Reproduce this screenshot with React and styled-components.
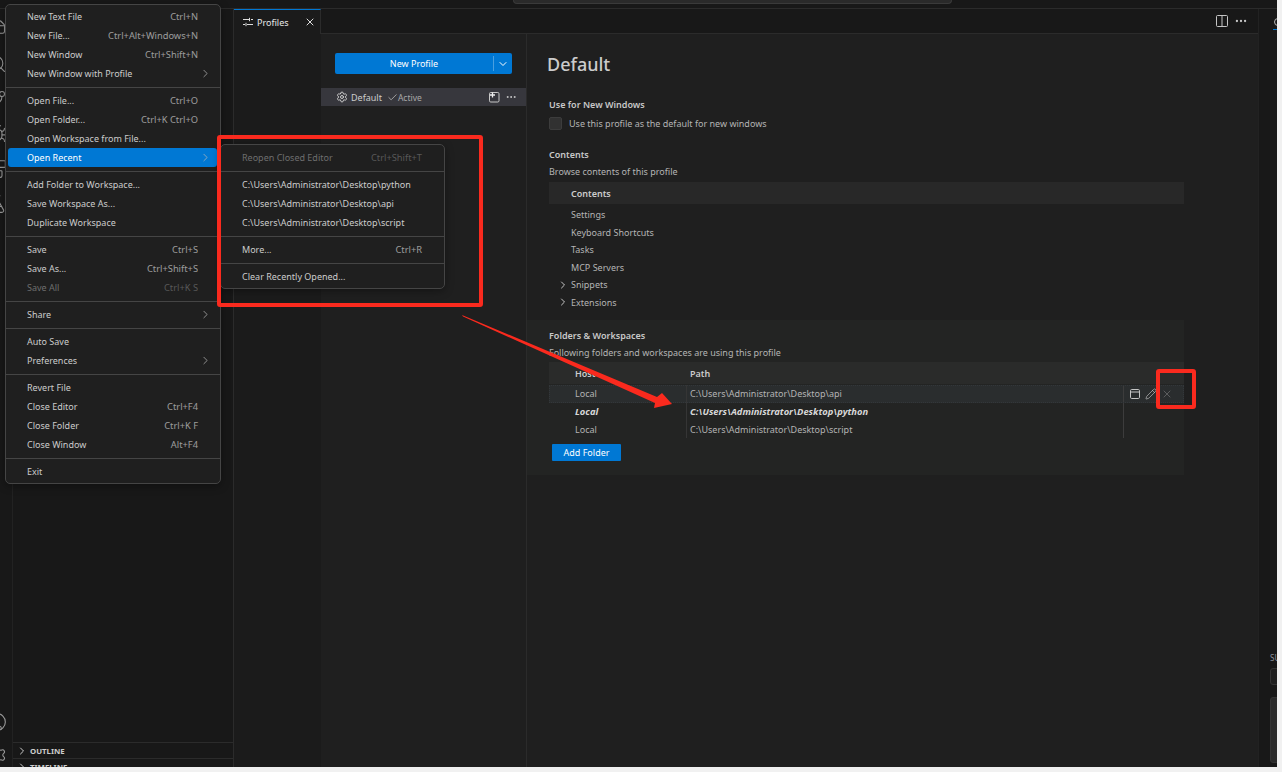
import styled, { createGlobalStyle } from "styled-components";
import {
  Files,
  Search,
  GitBranch,
  Bug,
  Blocks,
  FlaskConical,
  CircleUser,
  Settings,
  ChevronRight,
  ChevronDown,
  X,
  Check,
  Ellipsis,
  Pencil,
} from "lucide-react";

const fileMenu = [
  [
    { label: "New Text File", keys: "Ctrl+N" },
    { label: "New File...", keys: "Ctrl+Alt+Windows+N" },
    { label: "New Window", keys: "Ctrl+Shift+N" },
    { label: "New Window with Profile", more: true },
  ],
  [
    { label: "Open File...", keys: "Ctrl+O" },
    { label: "Open Folder...", keys: "Ctrl+K Ctrl+O" },
    { label: "Open Workspace from File..." },
    { label: "Open Recent", more: true, active: true },
  ],
  [
    { label: "Add Folder to Workspace..." },
    { label: "Save Workspace As..." },
    { label: "Duplicate Workspace" },
  ],
  [
    { label: "Save", keys: "Ctrl+S" },
    { label: "Save As...", keys: "Ctrl+Shift+S" },
    { label: "Save All", keys: "Ctrl+K S", disabled: true },
  ],
  [{ label: "Share", more: true }],
  [{ label: "Auto Save" }, { label: "Preferences", more: true }],
  [
    { label: "Revert File" },
    { label: "Close Editor", keys: "Ctrl+F4" },
    { label: "Close Folder", keys: "Ctrl+K F" },
    { label: "Close Window", keys: "Alt+F4" },
  ],
  [{ label: "Exit" }],
];

const recentMenu = [
  [{ label: "Reopen Closed Editor", keys: "Ctrl+Shift+T", disabled: true }],
  [
    { label: "C:\\Users\\Administrator\\Desktop\\python" },
    { label: "C:\\Users\\Administrator\\Desktop\\api" },
    { label: "C:\\Users\\Administrator\\Desktop\\script" },
  ],
  [{ label: "More...", keys: "Ctrl+R" }],
  [{ label: "Clear Recently Opened..." }],
];

const contents = [
  { label: "Settings" },
  { label: "Keyboard Shortcuts" },
  { label: "Tasks" },
  { label: "MCP Servers" },
  { label: "Snippets", more: true },
  { label: "Extensions", more: true },
];

const folders = [
  { host: "Local", path: "C:\\Users\\Administrator\\Desktop\\api", focused: true },
  { host: "Local", path: "C:\\Users\\Administrator\\Desktop\\python", current: true },
  { host: "Local", path: "C:\\Users\\Administrator\\Desktop\\script" },
];

export default function App() {
  return (
    <>
      <GlobalStyle />
      <Window>
        <TitleBar>
          <CommandCenter />
        </TitleBar>
        <Workbench>
          <ActivityBar>
            <ActivityGroup>
              <Files size={20} strokeWidth={1.3} />
              <Search size={20} strokeWidth={1.3} />
              <GitBranch size={20} strokeWidth={1.3} />
              <Bug size={20} strokeWidth={1.3} />
              <Blocks size={20} strokeWidth={1.3} />
              <FlaskConical size={20} strokeWidth={1.3} />
            </ActivityGroup>
            <ActivityGroup $bottom>
              <CircleUser size={20} strokeWidth={1.3} />
              <Settings size={20} strokeWidth={1.3} />
            </ActivityGroup>
          </ActivityBar>

          <SideBar>
            <SideFooter>
              <SideHeader>
                <ChevronRight size={12} />
                OUTLINE
              </SideHeader>
              <SideHeader>
                <ChevronRight size={12} />
                TIMELINE
              </SideHeader>
            </SideFooter>
          </SideBar>

          <Editor>
            <TabBar>
              <Tab>
                <svg width="12" height="12" viewBox="0 0 12 12" fill="none" stroke="#ddd">
                  <path d="M1 3.5h6M9 3.5h2M7.5 1.8v3.4M1 8.5h2M5 8.5h6M4 6.8v3.4" />
                </svg>
                <TabLabel>Profiles</TabLabel>
                <X size={12} color="#ddd" />
              </Tab>
              <TabActions>
                <svg width="14" height="14" viewBox="0 0 14 14" fill="none" stroke="#c5c5c5">
                  <rect x="1.5" y="1.5" width="11" height="11" rx="1" />
                  <path d="M7 1.5v11" />
                </svg>
                <Ellipsis size={14} color="#c5c5c5" />
              </TabActions>
            </TabBar>

            <ProfilesBody>
              <ProfilesList>
                <NewProfile>
                  <NewProfileLabel>New Profile</NewProfileLabel>
                  <NewProfileArrow>
                    <ChevronDown size={12} />
                  </NewProfileArrow>
                </NewProfile>
                <ProfileRow>
                  <Settings size={12} />
                  <ProfileName>Default</ProfileName>
                  <ProfileActive>
                    <Check size={11} />
                    Active
                  </ProfileActive>
                  <ProfileActions>
                    <svg width="12" height="12" viewBox="0 0 12 12" fill="none" stroke="#c8c8c8">
                      <rect x="1.5" y="1.5" width="9.5" height="9.5" rx="1.2" />
                      <path d="M4.5 1.5v5M2 4h5" stroke="#eeeeee" strokeWidth="1.3" />
                    </svg>
                    <Ellipsis size={12} />
                  </ProfileActions>
                </ProfileRow>
              </ProfilesList>

              <ProfileDetail>
                <ProfileTitle>Default</ProfileTitle>
                <Section>
                  <SectionTitle>Use for New Windows</SectionTitle>
                  <CheckRow>
                    <CheckBox />
                    <Text>Use this profile as the default for new windows</Text>
                  </CheckRow>
                </Section>
                <ContentsSection>
                  <SectionTitle>Contents</SectionTitle>
                  <Text>Browse contents of this profile</Text>
                  <ContentsHeader>Contents</ContentsHeader>
                  {contents.map((item) => (
                    <ContentsRow key={item.label}>
                      <ContentsChevron>
                        {item.more && <ChevronRight size={12} />}
                      </ContentsChevron>
                      {item.label}
                    </ContentsRow>
                  ))}
                </ContentsSection>
                <FoldersSection>
                  <SectionTitle>Folders &amp; Workspaces</SectionTitle>
                  <Text>Following folders and workspaces are using this profile</Text>
                  <FolderTable>
                    <FolderHeader>
                      <span>Host</span>
                      <span>Path</span>
                    </FolderHeader>
                    <FolderRows>
                      {folders.map((row) => (
                        <FolderRow key={row.path} $focused={row.focused} $current={row.current}>
                          <HostCell>{row.host}</HostCell>
                          <PathCell>{row.path}</PathCell>
                          <ActionCell>
                            {row.focused && (
                              <>
                                <svg width="12" height="12" viewBox="0 0 12 12" fill="none" stroke="#c5c5c5">
                                  <rect x="1.5" y="1.5" width="9" height="9" rx="1.2" />
                                  <path d="M1.5 4h9" />
                                </svg>
                                <Pencil size={12} color="#c5c5c5" strokeWidth={1.3} />
                                <X size={12} color="#777" strokeWidth={1.3} />
                              </>
                            )}
                          </ActionCell>
                        </FolderRow>
                      ))}
                    </FolderRows>
                  </FolderTable>
                  <AddFolder>Add Folder</AddFolder>
                </FoldersSection>
              </ProfileDetail>
            </ProfilesBody>
          </Editor>

          <RightPanel>
            <RightTab>
              <svg width="10" height="10" viewBox="0 0 10 10" fill="none" stroke="#b8b8b8">
                <circle cx="5" cy="5" r="3.5" />
              </svg>
            </RightTab>
            <RightBottom>
              <RightLabel>SU</RightLabel>
              <RightInput />
              <RightBox />
            </RightBottom>
          </RightPanel>
        </Workbench>

        <MainMenu>
          <MenuList groups={fileMenu} />
        </MainMenu>
        <RecentMenu>
          <MenuList groups={recentMenu} />
        </RecentMenu>

        <RedBox $x={217} $y={135} $w={266} $h={172} />
        <RedBox $x={1156} $y={369} $w={40} $h={40} />
        <Arrow width="240" height="110" viewBox="0 0 240 110">
          <polygon points="2,5 197,87 202,83 212,94 194,98 195,93 3,6.5" fill="#fa2a1e" />
        </Arrow>
      </Window>
    </>
  );
}

const MenuList = ({ groups }) => {
  return groups.map((group, i) => (
    <div key={i}>
      {i > 0 && <MenuSeparator />}
      {group.map((item) => (
        <MenuItem key={item.label} $active={item.active} $disabled={item.disabled}>
          <span>{item.label}</span>
          {item.keys && <MenuKeys>{item.keys}</MenuKeys>}
          {item.more && (
            <MenuMore>
              <ChevronRight size={13} strokeWidth={1.3} />
            </MenuMore>
          )}
        </MenuItem>
      ))}
    </div>
  ));
};

const GlobalStyle = createGlobalStyle`
  html, body {
    margin: 0;
    padding: 0;
    width: 1282px;
    height: 772px;
    overflow: hidden;
    background: #f1f1f1;
  }
  * {
    box-sizing: border-box;
  }
  body {
    font-family: "Noto Sans", "Open Sans", sans-serif;
    font-size: 9px;
    color: #cccccc;
  }
`;

const Window = styled.div`
  position: relative;
  width: 1277px;
  height: 767px;
  background: #181818;
  overflow: hidden;
  display: flex;
  flex-direction: column;
`;

const TitleBar = styled.div`
  height: 9px;
  flex: none;
  background: #181818;
  border-bottom: 1px solid #2b2b2b;
  padding-left: 513px;
`;

const CommandCenter = styled.div`
  width: 439px;
  height: 4px;
  background: #2a2a2a;
  border: 1px solid #3a3a3a;
  border-top: none;
  border-radius: 0 0 4px 4px;
`;

const Workbench = styled.div`
  flex: 1;
  min-height: 0;
  display: flex;
`;

const ActivityBar = styled.div`
  width: 13px;
  flex: none;
  display: flex;
  flex-direction: column;
  justify-content: space-between;
  overflow: hidden;
  background: #181818;
  border-right: 1px solid #222;
  color: #9a9a9a;
`;

const ActivityGroup = styled.div`
  display: flex;
  flex-direction: column;
  gap: ${(p) => (p.$bottom ? "13px" : "15px")};
  margin-left: -13px;
  padding-top: ${(p) => (p.$bottom ? "0" : "10px")};
  padding-bottom: ${(p) => (p.$bottom ? "2px" : "0")};
  svg {
    flex: none;
  }
`;

const SideBar = styled.div`
  width: 221px;
  flex: none;
  display: flex;
  flex-direction: column;
  justify-content: flex-end;
  overflow: hidden;
  background: #181818;
  border-right: 1px solid #2b2b2b;
`;

const SideFooter = styled.div`
  flex: none;
  margin-bottom: -7px;
`;

const SideHeader = styled.div`
  height: 16px;
  display: flex;
  align-items: center;
  gap: 2px;
  padding-left: 3px;
  border-top: 1px solid #2b2b2b;
  font-size: 7.8px;
  font-weight: 700;
  color: #cccccc;
`;

const Editor = styled.div`
  width: 1024px;
  flex: none;
  display: flex;
  flex-direction: column;
  background: #1f1f1f;
`;

const TabBar = styled.div`
  height: 25px;
  flex: none;
  display: flex;
  background: #181818;
`;

const Tab = styled.div`
  width: 87px;
  display: flex;
  align-items: center;
  padding: 0 4px 0 8px;
  background: #1b1b1b;
  border-top: 1px solid #0078d4;
  border-right: 1px solid #2b2b2b;
  color: #e8e8e8;
`;

const TabLabel = styled.span`
  flex: 1;
  margin-left: 3px;
`;

const TabActions = styled.div`
  flex: 1;
  display: flex;
  align-items: center;
  justify-content: flex-end;
  gap: 5px;
  padding-right: 10px;
  border-bottom: 1px solid #2b2b2b;
`;

const ProfilesBody = styled.div`
  flex: 1;
  min-height: 0;
  display: flex;
`;

const ProfilesList = styled.div`
  width: 293px;
  flex: none;
  padding-top: 19px;
  border-right: 1px solid #2b2b2b;
  background: linear-gradient(to right, #1b1b1b 87px, #1f1f1f 87px);
`;

const NewProfile = styled.div`
  width: 177px;
  height: 21px;
  margin-left: 101px;
  display: flex;
  background: #0078d4;
  border-radius: 2px;
  color: #ffffff;
`;

const NewProfileLabel = styled.div`
  flex: 1;
  display: flex;
  align-items: center;
  justify-content: center;
`;

const NewProfileArrow = styled.div`
  width: 19px;
  margin: 3px 0;
  display: flex;
  align-items: center;
  justify-content: center;
  border-left: 1px solid #4a9fe0;
`;

const ProfileRow = styled.div`
  width: 205px;
  height: 18px;
  margin: 14px 0 0 87px;
  padding: 0 9px 0 15px;
  display: flex;
  align-items: center;
  background: #37373d;
  color: #cccccc;
`;

const ProfileName = styled.span`
  margin-left: 3px;
`;

const ProfileActive = styled.span`
  display: flex;
  align-items: center;
  margin-left: 5px;
  font-size: 8.5px;
  color: #a8a8a8;
`;

const ProfileActions = styled.div`
  margin-left: auto;
  display: flex;
  align-items: center;
  gap: 5px;
`;

const ProfileDetail = styled.div`
  flex: 1;
  min-width: 0;
`;

const ProfileTitle = styled.div`
  height: 26px;
  margin: 17px 0 0 20px;
  font-size: 18px;
  font-weight: 500;
  line-height: 26px;
  color: #cccccc;
`;

const Section = styled.div`
  margin-top: 20px;
  padding-left: 22px;
`;

const SectionTitle = styled.div`
  height: 16px;
  line-height: 16px;
  font-weight: 600;
  color: #c8c8c8;
`;

const Text = styled.div`
  height: 17px;
  line-height: 17px;
  color: #b4b4b4;
`;

const CheckRow = styled.div`
  display: flex;
  align-items: center;
  gap: 7px;
  margin-top: 2px;
`;

const CheckBox = styled.div`
  width: 13px;
  height: 13px;
  background: #313131;
  border: 1px solid #3c3c3c;
  border-radius: 2px;
`;

const ContentsSection = styled(Section)`
  margin-top: 15px;
  width: 657px;
`;

const ContentsHeader = styled.div`
  height: 22px;
  margin-top: 2px;
  padding-left: 22px;
  display: flex;
  align-items: center;
  background: #282828;
  font-weight: 600;
  color: #cccccc;
`;

const ContentsRow = styled.div`
  height: 17.5px;
  display: flex;
  align-items: center;
  color: #b4b4b4;
  ${ContentsHeader} + & {
    margin-top: 2px;
  }
`;

const ContentsChevron = styled.span`
  width: 22px;
  padding-left: 8px;
  display: flex;
  color: #c5c5c5;
`;

const FoldersSection = styled.div`
  width: 657px;
  height: 155px;
  margin-top: 9px;
  padding: 8px 0 0 22px;
  background: #232423;
`;

const FolderTable = styled.div`
  margin-top: 1px;
`;

const FolderHeader = styled.div`
  height: 22px;
  display: grid;
  grid-template-columns: 137px 1fr;
  align-items: center;
  background: #2a2b2a;
  font-weight: 600;
  color: #cccccc;
  span:first-child {
    padding-left: 26px;
  }
  span:last-child {
    padding-left: 4px;
  }
`;

const FolderRows = styled.div`
  margin-top: 1px;
`;

const FolderRow = styled.div`
  height: 17.7px;
  display: grid;
  grid-template-columns: 137px 1fr 61px;
  align-items: stretch;
  background: ${(p) => (p.$focused ? "#2a2d2e" : "transparent")};
  outline: ${(p) => (p.$focused ? "1px dotted #33373a" : "none")};
  outline-offset: -1px;
  color: ${(p) => (p.$current ? "#d8d8d8" : "#b4b4b4")};
  font-size: ${(p) => (p.$current ? "9.4px" : "9px")};
  font-weight: ${(p) => (p.$current ? 700 : 400)};
  font-style: ${(p) => (p.$current ? "italic" : "normal")};
`;

const HostCell = styled.div`
  padding-left: 26px;
  display: flex;
  align-items: center;
`;

const PathCell = styled.div`
  padding-left: 3px;
  display: flex;
  align-items: center;
  border-left: 1px solid #353535;
`;

const ActionCell = styled.div`
  display: flex;
  align-items: center;
  gap: 4px;
  padding-left: 5px;
  border-left: 1px solid #3c3c3c;
`;

const AddFolder = styled.div`
  width: 69px;
  height: 17px;
  margin: 6px 0 0 3px;
  display: flex;
  align-items: center;
  justify-content: center;
  background: #0078d4;
  border-radius: 1px;
  color: #ffffff;
`;

const RightPanel = styled.div`
  flex: 1;
  min-width: 0;
  display: flex;
  flex-direction: column;
  justify-content: space-between;
  overflow: hidden;
  background: #181818;
  border-left: 1px solid #222;
`;

const RightTab = styled.div`
  width: 5px;
  height: 21px;
  margin-left: 14px;
  padding-top: 8px;
  overflow: hidden;
  border-bottom: 1px solid #0078d4;
`;

const RightBottom = styled.div`
  padding: 0 0 4px 11px;
  width: 40px;
`;

const RightLabel = styled.div`
  height: 14px;
  font-size: 8px;
  color: #8a8f98;
`;

const RightInput = styled.div`
  height: 17px;
  margin-top: 2px;
  background: #1f1f1f;
  border: 1px solid #333;
  border-radius: 3px;
`;

const RightBox = styled.div`
  height: 66px;
  margin-top: 12px;
  background: #2a2a2a;
  border: 1px solid #333;
  border-radius: 3px;
`;

const Floating = styled.div`
  position: absolute;
  background: #1f1f1f;
  border: 1px solid #454545;
  border-radius: 5px;
  box-shadow: 0 2px 8px rgba(0, 0, 0, 0.36);
  padding: ${(p) => p.$top}px 3px 0 2px;
`;

const MainMenu = styled(Floating).attrs({ $top: 2 })`
  left: 5px;
  top: 4px;
  width: 216px;
  height: 480px;
`;

const RecentMenu = styled(Floating).attrs({ $top: 3 })`
  left: 220px;
  top: 144px;
  width: 225px;
  height: 145px;
`;

const MenuSeparator = styled.div`
  height: 1px;
  margin: 4px -3px 3px -2px;
  background: #454545;
`;

const MenuItem = styled.div`
  height: 19px;
  position: relative;
  display: flex;
  align-items: center;
  justify-content: space-between;
  padding: 0 19px;
  border-radius: 3px;
  background: ${(p) => (p.$active ? "#0078d4" : "transparent")};
  color: ${(p) => (p.$active ? "#ffffff" : p.$disabled ? "#6e6e6e" : "#cccccc")};
`;

const MenuKeys = styled.span`
  color: inherit;
  font-size: 9.3px;
  opacity: 0.72;
`;

const MenuMore = styled.span`
  position: absolute;
  right: 5px;
  top: 3px;
  display: flex;
  color: #bbbbbb;
`;

const RedBox = styled.div`
  position: absolute;
  left: ${(p) => p.$x}px;
  top: ${(p) => p.$y}px;
  width: ${(p) => p.$w}px;
  height: ${(p) => p.$h}px;
  border: 4px solid #fa2a1e;
  border-radius: 3px;
`;

const Arrow = styled.svg`
  position: absolute;
  left: 460px;
  top: 310px;
`;
